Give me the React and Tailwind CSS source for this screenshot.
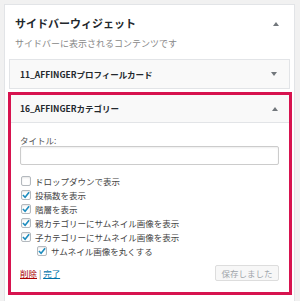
import React from "react";

const font = { fontFamily: '"Noto Sans CJK JP", "Noto Sans", sans-serif' };

function Arrow({ up }) {
  return (
    <svg width="6" height="4" viewBox="0 0 6 4" className="block">
      {up ? (
        <polygon points="3,0 6,4 0,4" fill="#72777c" />
      ) : (
        <polygon points="0,0 6,0 3,4" fill="#72777c" />
      )}
    </svg>
  );
}

function Check({ checked }) {
  return (
    <span className="w-[10px] h-[10px] border border-[#b4b9be] rounded-[2px] bg-white shadow-[inset_0_1px_2px_rgba(0,0,0,0.1)] flex items-center justify-center shrink-0">
      {checked && (
        <svg width="9" height="8" viewBox="0 0 9 8">
          <path d="M1 4 L3.5 6.5 L8 1" fill="none" stroke="#1e8cbe" strokeWidth="1.8" />
        </svg>
      )}
    </span>
  );
}

function Row({ label, checked, indent }) {
  return (
    <div className={`h-[14px] flex items-center gap-[4px] ${indent ? "pl-[17px]" : "pl-[1px]"}`}>
      <Check checked={checked} />
      <span className="text-[8.5px] text-[#444] leading-none">{label}</span>
    </div>
  );
}

export default function App() {
  return (
    <div className="w-[300px] h-[301px] bg-[#f1f1f1] overflow-hidden pt-[4px] pl-[4px]" style={font}>
      <div className="w-[291px] h-[310px] bg-white border border-[#e2e4e7]">
        <div className="flex items-center justify-between pl-[10px] pr-[15px] pt-[12px] h-[25px]">
          <span className="text-[11px] font-bold text-[#23282d] leading-none">サイドバーウィジェット</span>
          <Arrow up />
        </div>
        <div className="pl-[10px] h-[26px] flex items-center">
          <span className="text-[9px] text-[#888] leading-none">サイドバーに表示されるコンテンツです</span>
        </div>
        <div className="ml-[4px] mt-[3px] w-[281px] h-[30px] border border-[#e2e4e7] bg-[#f9f9f9] flex items-center justify-between pl-[10px] pr-[12px]">
          <span className="text-[8.5px] font-bold text-[#23282d] leading-none">11_AFFINGERプロフィールカード</span>
          <Arrow />
        </div>
        <div className="ml-[3px] mt-[3px] w-[284px] border-[3px] border-[#d7134f]">
          <div className="h-[28px] bg-[#f9f9f9] border-b border-[#e2e4e7] flex items-center justify-between pl-[9px] pr-[11px]">
            <span className="text-[8.5px] font-bold text-[#23282d] leading-none">16_AFFINGERカテゴリー</span>
            <Arrow up />
          </div>
          <div className="pl-[9px] pr-[10px] pt-[12px] pb-[11px]">
            <div className="h-[11px] text-[8.5px] text-[#555] leading-[11px]">タイトル:</div>
            <div className="h-[19px] border border-[#ccc] rounded-[2px] bg-white shadow-[inset_0_1px_2px_rgba(0,0,0,0.07)]"></div>
            <div className="mt-[9px]">
              <Row label="ドロップダウンで表示" />
              <Row label="投稿数を表示" checked />
              <Row label="階層を表示" checked />
              <Row label="親カテゴリーにサムネイル画像を表示" checked />
              <Row label="子カテゴリーにサムネイル画像を表示" checked />
              <Row label="サムネイル画像を丸くする" checked indent />
            </div>
            <div className="mt-[7px] h-[16px] flex items-center justify-between">
              <span className="text-[8.5px] leading-none">
                <span className="text-[#a00] underline">削除</span>
                <span className="text-[#666]"> | </span>
                <span className="text-[#0073aa] underline">完了</span>
              </span>
              <span className="w-[64px] h-[16px] border border-[#ddd] bg-[#f7f7f7] rounded-[2px] text-[8.5px] text-[#a0a5aa] flex items-center justify-center leading-none">
                保存しました
              </span>
            </div>
          </div>
        </div>
      </div>
    </div>
  );
}
